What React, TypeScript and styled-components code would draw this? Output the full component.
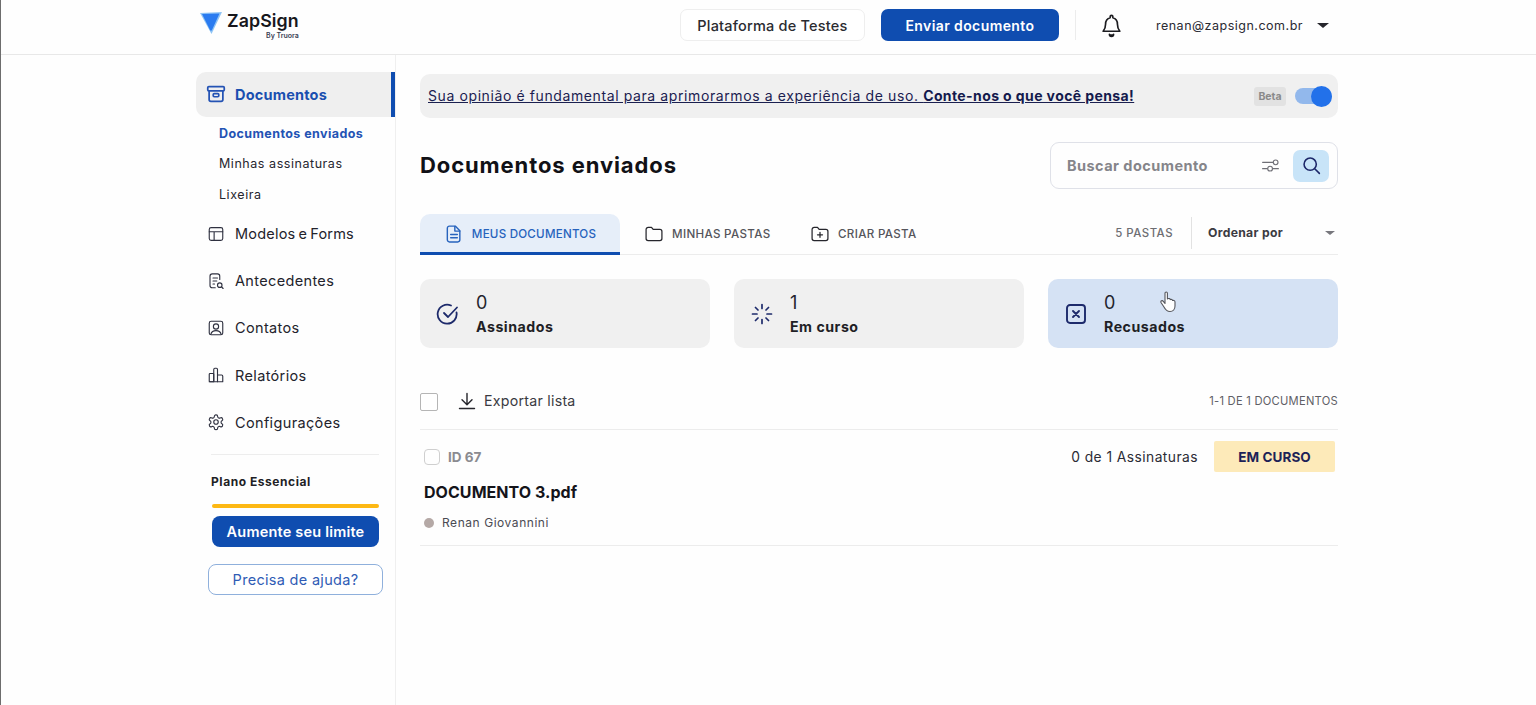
import React from "react";
import styled, { createGlobalStyle } from "styled-components";

const Global = createGlobalStyle`
  html, body { margin: 0; padding: 0; background: #fefefe; }
  body { font-family: Inter, "Liberation Sans", sans-serif; color: #1b1b1f; overflow: hidden; }
  * { box-sizing: border-box; }
  svg { display: block; flex: none; }
`;

const Page = styled.div`
  width: 1536px;
  height: 705px;
  border-left: 1px solid #6d6d6d;
  display: flex;
  flex-direction: column;
  overflow: hidden;
`;

const Header = styled.header`
  height: 55px;
  flex: none;
  border-bottom: 1px solid #e8e8e8;
  display: flex;
  align-items: center;
  padding: 0 207px 4px 198px;
`;

const Logo = styled.div`
  display: flex;
  align-items: flex-start;
  gap: 4px;
  height: 40px;
  padding-top: 6px;
`;

const LogoText = styled.div`
  display: flex;
  flex-direction: column;
  align-items: flex-end;
  margin-top: -1px;
`;

const LogoName = styled.span`
  font-size: 17.8px;
  font-weight: 600;
  line-height: 22px;
  letter-spacing: 0.1px;
  color: #17171c;
`;

const LogoBy = styled.span`
  font-size: 7px;
  font-weight: 600;
  line-height: 8px;
  color: #3a3f55;
`;

const HeaderRight = styled.div`
  margin-left: auto;
  display: flex;
  align-items: center;
`;

const TestButton = styled.button`
  width: 185px;
  height: 32px;
  border: 1px solid #eeeeee;
  border-radius: 7px;
  background: #fff;
  font: 500 14.5px Inter, sans-serif;
  letter-spacing: 0.2px;
  color: #2b2b30;
`;

const SendButton = styled.button`
  width: 178px;
  height: 32px;
  margin-left: 16px;
  border: 0;
  border-radius: 7px;
  background: #0f4db0;
  color: #fff;
  font: 600 14px Inter, sans-serif;
  letter-spacing: 0.4px;
`;

const HeaderRule = styled.div`
  width: 1px;
  height: 30px;
  margin: 0 23px 0 16px;
  background: #ececec;
`;

const Email = styled.span`
  margin-left: 32px;
  font-size: 12.5px;
  font-weight: 400;
  letter-spacing: 0.5px;
  color: #2a2a33;
`;

const Caret = styled.span<{ $color?: string; $w?: number }>`
  width: 0;
  height: 0;
  border-left: ${(p) => p.$w ?? 6}px solid transparent;
  border-right: ${(p) => p.$w ?? 6}px solid transparent;
  border-top: ${(p) => (p.$w ?? 6) - 0.5}px solid ${(p) => p.$color ?? "#26262c"};
`;

const EmailCaret = styled(Caret)`
  margin-left: 14px;
`;

const Body = styled.div`
  flex: 1;
  display: flex;
  min-height: 0;
`;

const Sidebar = styled.aside`
  width: 395px;
  flex: none;
  padding: 17px 0 0 195px;
  border-right: 1px solid #efefef;
`;

const ActiveNav = styled.div`
  height: 45px;
  display: flex;
  align-items: center;
  gap: 8px;
  padding: 0 0 1px 9px;
  background: #efefef;
  border-radius: 10px 0 0 10px;
  border-right: 4px solid #0f4db0;
  font-size: 14.5px;
  font-weight: 700;
  letter-spacing: 0.2px;
  color: #1a4fb0;
`;

const SubList = styled.div`
  display: flex;
  flex-direction: column;
  padding: 1px 0 0 23px;
`;

const SubItem = styled.div<{ $active?: boolean }>`
  height: 30.5px;
  display: flex;
  align-items: center;
  font-size: 12.5px;
  letter-spacing: ${(p) => (p.$active ? "0.42px" : "0.55px")};
  font-weight: ${(p) => (p.$active ? 700 : 400)};
  color: ${(p) => (p.$active ? "#2453b4" : "#26262e")};
`;

const NavList = styled.div`
  display: flex;
  flex-direction: column;
  margin-top: 0.5px;
`;

const NavItem = styled.div<{ $spacing?: number }>`
  height: 47.2px;
  display: flex;
  align-items: center;
  gap: 10px;
  padding-left: 11px;
  font-size: 14.5px;
  font-weight: 400;
  letter-spacing: ${(p) => p.$spacing ?? 0.35}px;
  word-spacing: -1.2px;
  color: #23232c;
`;

const SideRule = styled.div`
  height: 1px;
  margin: 8.5px 16px 0 15px;
  background: #ededed;
`;

const PlanName = styled.div`
  margin: 20px 0 0 15px;
  font-size: 12px;
  line-height: 14px;
  font-weight: 700;
  letter-spacing: 0.55px;
  color: #1f1f26;
`;

const PlanBar = styled.div`
  height: 4px;
  margin: 15px 16px 0 16px;
  border-radius: 2px;
  background: #fdb813;
`;

const UpgradeButton = styled.button`
  display: block;
  width: 167px;
  height: 31px;
  margin: 8px 0 0 16px;
  border: 0;
  border-radius: 8px;
  background: #0f4db0;
  color: #fff;
  font: 600 14.5px Inter, sans-serif;
  letter-spacing: 0.2px;
`;

const HelpButton = styled.button`
  display: block;
  width: 175px;
  height: 31px;
  margin: 17px 0 0 12px;
  border: 1px solid #8fb0dc;
  border-radius: 8px;
  background: #fff;
  color: #2f5cb5;
  font: 400 14.5px Inter, sans-serif;
  letter-spacing: 0.3px;
`;

const Main = styled.main`
  width: 918px;
  margin-left: 24px;
  padding-top: 19px;
`;

const Banner = styled.div`
  height: 44px;
  border-radius: 10px;
  background: #f0f0f0;
  display: flex;
  align-items: center;
  padding: 0 6px 0 8px;
`;

const BannerText = styled.span`
  margin-bottom: 2px;
  font-size: 14px;
  letter-spacing: 0.6px;
  text-decoration: underline;
  color: #1b2050;
  white-space: nowrap;
  b { font-weight: 700; letter-spacing: 0.4px; color: #141a4d; }
`;

const BetaTag = styled.span`
  margin-left: auto;
  width: 32px;
  height: 19px;
  border-radius: 3px;
  background: #e2e2e2;
  display: flex;
  align-items: center;
  justify-content: center;
  font-size: 10.5px;
  font-weight: 700;
  color: #8a8a8a;
`;

const Toggle = styled.div`
  position: relative;
  width: 37px;
  height: 16px;
  margin-left: 9px;
  border-radius: 8px;
  background: #92b8ec;
`;

const ToggleKnob = styled.span`
  position: absolute;
  right: 0;
  top: -2.5px;
  width: 21px;
  height: 21px;
  border-radius: 50%;
  background: #2271ea;
`;

const TitleRow = styled.div`
  display: flex;
  align-items: center;
  justify-content: space-between;
  margin-top: 24px;
`;

const Title = styled.h1`
  margin: 0 0 2px;
  font-size: 22px;
  font-weight: 700;
  letter-spacing: 0.9px;
  color: #111116;
`;

const SearchBox = styled.div`
  width: 288px;
  height: 47px;
  border: 1px solid #dfe1e8;
  border-radius: 9px;
  display: flex;
  align-items: center;
  padding: 0 8px 0 16px;
`;

const SearchLabel = styled.span`
  margin-bottom: 1px;
  font-size: 14.5px;
  font-weight: 700;
  letter-spacing: 0.45px;
  color: #85858a;
`;

const FilterSlot = styled.span`
  margin-left: auto;
  margin-right: 13px;
`;

const SearchButton = styled.span`
  width: 36px;
  height: 32px;
  border-radius: 7px;
  background: #c8e4f8;
  display: flex;
  align-items: center;
  justify-content: center;
`;

const Tabs = styled.div`
  height: 41px;
  margin-top: 25px;
  display: flex;
  align-items: stretch;
  border-bottom: 1px solid #ececec;
`;

const Tab = styled.div<{ $active?: boolean; $w: number }>`
  width: ${(p) => p.$w}px;
  margin-bottom: ${(p) => (p.$active ? "-1px" : "0")};
  display: flex;
  align-items: center;
  justify-content: ${(p) => (p.$active ? "center" : "flex-start")};
  gap: 8px;
  font-size: 11.6px;
  font-weight: 500;
  letter-spacing: ${(p) => (p.$active ? "0.22px" : "0.32px")};
  padding: ${(p) => (p.$active ? "2px 0 0" : "0 0 0 24px")};
  color: ${(p) => (p.$active ? "#2763bd" : "#55555b")};
  background: ${(p) => (p.$active ? "#e6eef9" : "transparent")};
  border-radius: ${(p) => (p.$active ? "10px 10px 0 0" : "0")};
  border-bottom: ${(p) => (p.$active ? "3px solid #0f4db0" : "0")};
`;

const TabsRight = styled.div`
  margin-left: auto;
  display: flex;
  align-items: center;
  height: 37px;
`;

const FolderCount = styled.span`
  font-size: 11.4px;
  font-weight: 500;
  letter-spacing: 0.5px;
  color: #6d6d72;
`;

const TabsRule = styled.span`
  width: 1px;
  height: 32px;
  margin: 0 16px 0 18px;
  background: #e2e2e2;
`;

const SortLabel = styled.span`
  width: 117px;
  font-size: 12.2px;
  font-weight: 700;
  letter-spacing: 0.3px;
  color: #3b3b42;
`;

const SortCaret = styled(Caret)`
  margin-right: 3px;
`;

const Stats = styled.div`
  display: grid;
  grid-template-columns: 290px 290px 290px;
  column-gap: 24px;
  margin-top: 24px;
`;

const StatCard = styled.div<{ $hover?: boolean }>`
  position: relative;
  height: 69px;
  border-radius: 10px;
  background: ${(p) => (p.$hover ? "#d5e2f4" : "#f0f0f0")};
  display: flex;
  align-items: center;
  padding-left: 16px;
  gap: 16px;
`;

const StatText = styled.div`
  display: flex;
  flex-direction: column;
  padding-top: 3px;
`;

const StatValue = styled.span`
  font-size: 18px;
  line-height: 24px;
  color: #24242c;
  font-weight: 400;
`;

const StatLabel = styled.span`
  font-size: 14.2px;
  line-height: 24px;
  font-weight: 700;
  letter-spacing: 0.5px;
  color: #1f1f26;
`;

const Pointer = styled.span`
  position: absolute;
  left: 112px;
  top: 12px;
`;

const ListBar = styled.div`
  height: 82px;
  border-bottom: 1px solid #ececec;
  display: flex;
  align-items: center;
  padding-top: 24px;
`;

const BigCheck = styled.span`
  width: 18px;
  height: 18px;
  margin-top: 2px;
  border: 1.5px solid #b5b5b5;
  border-radius: 2px;
  background: #fff;
`;

const ExportLabel = styled.span`
  margin-left: 7px;
  font-size: 14.2px;
  letter-spacing: 0.25px;
  color: #3a3a42;
`;

const ExportIcon = styled.span`
  margin-left: 19px;
`;

const ListCount = styled.span`
  margin-left: auto;
  font-size: 11.2px;
  letter-spacing: 0.25px;
  color: #5f5f66;
`;

const DocRow = styled.div`
  height: 116px;
  border-bottom: 1px solid #ececec;
  padding: 11px 3px 0 4px;
`;

const DocTop = styled.div`
  height: 31px;
  display: flex;
  align-items: center;
`;

const SmallCheck = styled.span`
  width: 16px;
  height: 16px;
  border: 1.5px solid #cfcfcf;
  border-radius: 4px;
`;

const DocId = styled.span`
  margin-left: 8px;
  font-size: 13.5px;
  font-weight: 700;
  color: #8b8b90;
`;

const Signatures = styled.span`
  margin-left: auto;
  font-size: 13.8px;
  letter-spacing: 0.45px;
  color: #2b2b35;
`;

const StatusTag = styled.span`
  width: 121px;
  height: 31px;
  margin-left: 16px;
  border-radius: 2px;
  background: #fdeab9;
  display: flex;
  align-items: center;
  justify-content: center;
  font-size: 13.5px;
  font-weight: 700;
  letter-spacing: 0.1px;
  color: #1c2257;
`;

const DocName = styled.div`
  margin-top: 8px;
  font-size: 16px;
  line-height: 24px;
  font-weight: 700;
  letter-spacing: 0.05px;
  color: #14141a;
`;

const Signer = styled.div`
  margin-top: 11px;
  display: flex;
  align-items: center;
  gap: 8px;
  font-size: 12px;
  letter-spacing: 0.55px;
  color: #4a4a52;
`;

const SignerDot = styled.span`
  width: 10px;
  height: 10px;
  border-radius: 50%;
  background: #b5a9a6;
`;

type IconProps = { size?: number; color?: string; sw?: number; children: React.ReactNode };
const Ico = ({ size = 18, color = "#2f3140", sw = 1.5, children }: IconProps) => (
  <svg width={size} height={size} viewBox="0 0 24 24" fill="none" stroke={color} strokeWidth={sw} strokeLinecap="round" strokeLinejoin="round">
    {children}
  </svg>
);

const ZapMark = () => (
  <svg width="24" height="24" viewBox="0 0 24 24">
    <path d="M1 2 L23 1 L12.500 23 Z" fill="#8fc4f5" />
    <path d="M3 3 L20.500 2.500 L13 19 Q12 20.500 11 19 Z" fill="#2a7bf0" />
  </svg>
);

const App = () => (
  <>
    <Global />
    <Page>
      <Header>
        <Logo>
          <ZapMark />
          <LogoText>
            <LogoName>ZapSign</LogoName>
            <LogoBy>By Truora</LogoBy>
          </LogoText>
        </Logo>
        <HeaderRight>
          <TestButton>Plataforma de Testes</TestButton>
          <SendButton>Enviar documento</SendButton>
          <HeaderRule />
          <Ico size={25} color="#1c1c20" sw={1.6}>
            <path d="M12 2.200a1.300 1.300 0 0 1 1.300 1.300v1c3 .7 4.400 3.200 4.400 6.300 0 3.400.8 5 2.300 6.700H4c1.500-1.700 2.300-3.300 2.300-6.700 0-3.100 1.400-5.600 4.400-6.300v-1A1.300 1.300 0 0 1 12 2.200Z" />
            <path d="M10 20.500a2 2 0 0 0 4 0" fill="#1c1c20" />
          </Ico>
          <Email>renan@zapsign.com.br</Email>
          <EmailCaret />
        </HeaderRight>
      </Header>
      <Body>
        <Sidebar>
          <ActiveNav>
            <Ico size={22} color="#2453b4" sw={1.9}>
              <rect x="3" y="4" width="18" height="4.500" rx="1.200" />
              <path d="M4.500 8.500V18a2 2 0 0 0 2 2h11a2 2 0 0 0 2-2V8.500" />
              <rect x="9" y="11.500" width="6" height="3.500" rx="1" />
            </Ico>
            Documentos
          </ActiveNav>
          <SubList>
            <SubItem $active>Documentos enviados</SubItem>
            <SubItem>Minhas assinaturas</SubItem>
            <SubItem>Lixeira</SubItem>
          </SubList>
          <NavList>
            <NavItem $spacing={0.2}>
              <Ico>
                <rect x="3" y="3.500" width="18" height="17" rx="2.500" />
                <path d="M3 9h18M9.500 9v11.500" />
              </Ico>
              Modelos e Forms
            </NavItem>
            <NavItem>
              <Ico>
                <path d="M11 21H7a3 3 0 0 1-3-3V5.500a3 3 0 0 1 3-3h7a3 3 0 0 1 3 3V10" />
                <path d="M8 8h6M8 12h5M8 16h2" />
                <circle cx="17" cy="17.500" r="3" />
                <path d="M19.500 20l2 2" />
              </Ico>
              Antecedentes
            </NavItem>
            <NavItem>
              <Ico>
                <rect x="3" y="3" width="18" height="18" rx="2.500" />
                <circle cx="12" cy="10" r="3.500" />
                <path d="M5 20.500c1-3.500 3.500-5 7-5s6 1.500 7 5" />
              </Ico>
              Contatos
            </NavItem>
            <NavItem>
              <Ico>
                <rect x="3" y="10" width="6" height="11" rx="1" />
                <path d="M9 21V4.500a1.500 1.500 0 0 1 1.500-1.500h2A1.500 1.500 0 0 1 14 4.500V21" />
                <path d="M14 12h5.500a1.500 1.500 0 0 1 1.500 1.500V21H3" />
              </Ico>
              Relatórios
            </NavItem>
            <NavItem>
              <Ico>
                <circle cx="12" cy="12" r="3" />
                <path d="M12.200 2.500h-.4a2 2 0 0 0-2 2v.2a2 2 0 0 1-1 1.700l-.4.200a2 2 0 0 1-2 0l-.2-.1a2 2 0 0 0-2.700.7l-.2.400a2 2 0 0 0 .7 2.700l.2.100a2 2 0 0 1 1 1.700v.5a2 2 0 0 1-1 1.700l-.2.100a2 2 0 0 0-.7 2.700l.2.400a2 2 0 0 0 2.700.7l.2-.1a2 2 0 0 1 2 0l.4.200a2 2 0 0 1 1 1.700v.2a2 2 0 0 0 2 2h.4a2 2 0 0 0 2-2v-.2a2 2 0 0 1 1-1.700l.4-.2a2 2 0 0 1 2 0l.2.100a2 2 0 0 0 2.700-.7l.2-.4a2 2 0 0 0-.7-2.700l-.2-.1a2 2 0 0 1-1-1.700v-.5a2 2 0 0 1 1-1.700l.2-.1a2 2 0 0 0 .7-2.700l-.2-.4a2 2 0 0 0-2.700-.7l-.2.100a2 2 0 0 1-2 0l-.4-.2a2 2 0 0 1-1-1.700v-.2a2 2 0 0 0-2-2Z" />
              </Ico>
              Configurações
            </NavItem>
          </NavList>
          <SideRule />
          <PlanName>Plano Essencial</PlanName>
          <PlanBar />
          <UpgradeButton>Aumente seu limite</UpgradeButton>
          <HelpButton>Precisa de ajuda?</HelpButton>
        </Sidebar>
        <Main>
          <Banner>
            <BannerText>
              Sua opinião é fundamental para aprimorarmos a experiência de uso. <b>Conte-nos o que você pensa!</b>
            </BannerText>
            <BetaTag>Beta</BetaTag>
            <Toggle>
              <ToggleKnob />
            </Toggle>
          </Banner>
          <TitleRow>
            <Title>Documentos enviados</Title>
            <SearchBox>
              <SearchLabel>Buscar documento</SearchLabel>
              <FilterSlot>
                <Ico size={19} color="#6f6f76" sw={1.4}>
                  <path d="M2 8h13M2 16h6M15 16h7" />
                  <circle cx="18.500" cy="8" r="3" />
                  <circle cx="11.500" cy="16" r="3" />
                </Ico>
              </FilterSlot>
              <SearchButton>
                <Ico size={21} color="#1c2668" sw={1.8}>
                  <circle cx="10.500" cy="10.500" r="7" />
                  <path d="m16 16 5 5" />
                </Ico>
              </SearchButton>
            </SearchBox>
          </TitleRow>
          <Tabs>
            <Tab $active $w={200}>
              <Ico size={20} color="#2763bd" sw={1.7}>
                <path d="M6.500 2.500h7l5.500 5.500v11a2.500 2.500 0 0 1-2.500 2.500h-10A2.500 2.500 0 0 1 4 19V5a2.500 2.500 0 0 1 2.500-2.500Z" />
                <path d="M13 3v5.500h6M8 12.500h8M8 16.500h8" />
              </Ico>
              MEUS DOCUMENTOS
            </Tab>
            <Tab $w={166}>
              <Ico size={20} color="#26262c" sw={1.5}>
                <path d="M2.500 6.500A2.500 2.500 0 0 1 5 4h4l2 2.500h8A2.500 2.500 0 0 1 21.500 9v8.500A2.500 2.500 0 0 1 19 20H5a2.500 2.500 0 0 1-2.500-2.500Z" />
              </Ico>
              MINHAS PASTAS
            </Tab>
            <Tab $w={150}>
              <Ico size={20} color="#26262c" sw={1.5}>
                <path d="M2.500 6.500A2.500 2.500 0 0 1 5 4h4l2 2.500h8A2.500 2.500 0 0 1 21.500 9v8.500A2.500 2.500 0 0 1 19 20H5a2.500 2.500 0 0 1-2.500-2.500Z" />
                <path d="M12 10v6M9 13h6" />
              </Ico>
              CRIAR PASTA
            </Tab>
            <TabsRight>
              <FolderCount>5 PASTAS</FolderCount>
              <TabsRule />
              <SortLabel>Ordenar por</SortLabel>
              <SortCaret $color="#77777d" $w={5} />
            </TabsRight>
          </Tabs>
          <Stats>
            <StatCard>
              <Ico size={24} color="#1d2a6b" sw={1.8}>
                <path d="M20.500 10.500A9.500 9.500 0 1 1 15 3.500" />
                <path d="m8 11 4 4 9-9.500" />
              </Ico>
              <StatText>
                <StatValue>0</StatValue>
                <StatLabel>Assinados</StatLabel>
              </StatText>
            </StatCard>
            <StatCard>
              <Ico size={24} color="#1d2a6b" sw={1.7}>
                <path d="M12 2.500v4M12 17.500v4M2.500 12h4.500M17 12h4.500M5.500 5.500l2.500 2.500M16 16l2.500 2.500M5.500 18.500 8 16M16 8l2.500-2.500" />
              </Ico>
              <StatText>
                <StatValue>1</StatValue>
                <StatLabel>Em curso</StatLabel>
              </StatText>
            </StatCard>
            <StatCard $hover>
              <Ico size={24} color="#1d2a6b" sw={1.9}>
                <rect x="3" y="3" width="18" height="18" rx="3" />
                <path d="m9 9 6 6M15 9l-6 6" />
              </Ico>
              <StatText>
                <StatValue>0</StatValue>
                <StatLabel>Recusados</StatLabel>
              </StatText>
              <Pointer>
                <svg width="17" height="22" viewBox="0 0 17 22">
                  <path d="M5 2.200c0-1.600 2.400-1.600 2.400 0V8l.3-.4c1.500-.4 2.300.1 2.500 1 1.200-.5 2.100-.1 2.400.9 1.400-.4 2.400.3 2.400 1.700v3.800c0 3-1.900 5.500-5 5.500-3.300 0-4.600-1.700-6-4.500L1 11.500c-.6-1.600 1.300-2.500 2.300-1.200L5 12.500Z" fill="#fff" stroke="#55565c" strokeWidth="1.100" strokeLinejoin="round" />
                </svg>
              </Pointer>
            </StatCard>
          </Stats>
          <ListBar>
            <BigCheck />
            <ExportIcon>
              <Ico size={20} color="#26262c" sw={1.7}>
                <path d="M12 3v13M6 10.500l6 6 6-6M3 21h18" />
              </Ico>
            </ExportIcon>
            <ExportLabel>Exportar lista</ExportLabel>
            <ListCount>1-1 DE 1 DOCUMENTOS</ListCount>
          </ListBar>
          <DocRow>
            <DocTop>
              <SmallCheck />
              <DocId>ID 67</DocId>
              <Signatures>0 de 1 Assinaturas</Signatures>
              <StatusTag>EM CURSO</StatusTag>
            </DocTop>
            <DocName>DOCUMENTO 3.pdf</DocName>
            <Signer>
              <SignerDot />
              Renan Giovannini
            </Signer>
          </DocRow>
        </Main>
      </Body>
    </Page>
  </>
);

export default App;
